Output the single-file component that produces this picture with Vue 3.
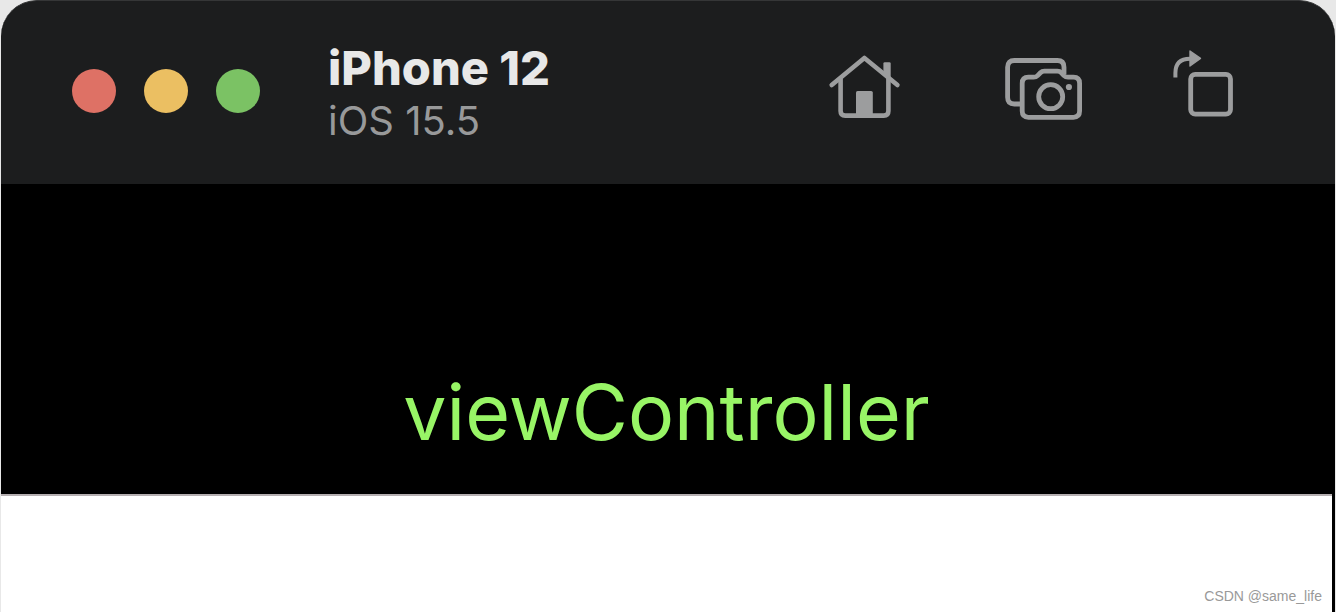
<script setup>
const lights = [
  { name: 'Close', tone: 'red' },
  { name: 'Minimize', tone: 'amber' },
  { name: 'Zoom', tone: 'green' },
]
</script>

<template>
  <div class="simulator">
    <header class="titlebar">
      <div class="lights">
        <button v-for="light in lights" :key="light.tone" type="button" class="light" :class="light.tone" :aria-label="light.name"></button>
      </div>
      <div class="device">
        <h1 class="name">iPhone 12</h1>
        <p class="version">iOS 15.5</p>
      </div>
      <div class="actions">
        <button type="button" class="action" aria-label="Home">
          <svg width="90" height="92" viewBox="0 0 90 92" fill="none" stroke="currentColor" stroke-width="4.6" stroke-linecap="round" stroke-linejoin="round">
            <path d="M11.7 40 44.4 13 77.4 40" />
            <path d="M20.6 34V66Q20.6 70.6 25.2 70.6H63.8Q68.4 70.6 68.4 66V34" />
            <path d="M63.4 29V18.6Q63.4 17.2 64.8 17.2H69.3Q70.7 17.2 70.7 18.6V35z" fill="currentColor" stroke="none" />
            <path d="M36 71V47.6Q36 46 37.6 46H51.2Q52.8 46 52.8 47.6V71z" fill="currentColor" stroke="none" />
          </svg>
        </button>
        <button type="button" class="action" aria-label="Screenshot">
          <svg width="100" height="92" viewBox="0 0 100 92" fill="none" stroke="currentColor" stroke-width="4.8" stroke-linejoin="round">
            <path d="M27 59H19.3Q12.6 59 12.6 52.3V22.2Q12.6 15.5 19.3 15.5H62.3Q69 15.5 69 22.2V29" />
            <path d="M33.4 32.2H38.6Q41 32.2 42.6 30.6L45.4 27.8Q47 26.2 49.4 26.2H62.4Q64.8 26.2 66.4 27.8L69 30.6Q70.6 32.2 73 32.2H78.4Q84.6 32.2 84.6 38.4V66.1Q84.6 72.3 78.4 72.3H33.4Q27.2 72.3 27.2 66.1V38.4Q27.2 32.2 33.4 32.2Z" />
            <circle cx="55.7" cy="51.7" r="12" />
            <circle cx="73.9" cy="42" r="3.1" fill="currentColor" stroke="none" />
          </svg>
        </button>
        <button type="button" class="action" aria-label="Rotate">
          <svg width="90" height="92" viewBox="0 0 90 92" fill="none" stroke="currentColor" stroke-width="4.8">
            <rect x="30.7" y="29.3" width="39.8" height="39.8" rx="4.6" />
            <path d="M15.4 32.6V28Q15.4 13.7 30 13.7" stroke-width="4" />
            <path d="M30 6 40.5 13.4 30 21z" fill="currentColor" stroke-width="1.4" stroke-linejoin="round" />
          </svg>
        </button>
      </div>
    </header>
    <main class="screen">
      <h2 class="nav-title">viewController</h2>
      <section class="content">
        <p class="credit">CSDN @same_life</p>
      </section>
    </main>
  </div>
</template>

<style>
body {
  margin: 0;
  background: #e8e8e8;
}
</style>

<style scoped>
.simulator {
  box-sizing: border-box;
  display: flex;
  flex-direction: column;
  min-height: 100vh;
  padding: 0 1px;
  font-family: Inter, "Liberation Sans", sans-serif;
}
h1, h2, p {
  margin: 0;
}
button {
  padding: 0;
  border: 0;
  background: none;
}
.titlebar {
  box-sizing: border-box;
  display: flex;
  align-items: center;
  height: 184px;
  padding: 0 85px 3px 71px;
  border-top: 1px solid #353637;
  border-radius: 36px 36px 0 0;
  background: #1c1d1e;
}
.lights {
  display: flex;
  gap: 28px;
}
.light {
  width: 44px;
  height: 44px;
  border-radius: 50%;
}
.red { background: #de7165; }
.amber { background: #ebbf62; }
.green { background: #7bc264; }
.device {
  margin-left: 68px;
  padding-top: 7px;
}
.name {
  color: #e8e8e8;
  font-size: 47px;
  font-weight: 800;
  line-height: 52px;
}
.version {
  color: #98999a;
  font-size: 40px;
  font-weight: 400;
  line-height: 54px;
}
.actions {
  display: flex;
  margin-left: auto;
}
.action {
  display: block;
  color: #9c9d9e;
}
.action + .action {
  margin-left: 85px;
}
.action + .action + .action {
  margin-left: 65px;
}
.action svg {
  display: block;
}
.screen {
  flex: 1;
  display: flex;
  flex-direction: column;
  background: #000;
}
.nav-title {
  padding: 180px 3px 34px 0;
  color: #98f566;
  font-size: 77px;
  font-weight: 400;
  line-height: 96px;
  text-align: center;
}
.content {
  flex: 1;
  display: flex;
  align-items: flex-end;
  justify-content: flex-end;
  margin-right: 3px;
  padding: 0 10px 6px;
  border-top: 2px solid #b5afb1;
  background: #fff;
}
.credit {
  color: #999;
  font-family: "Liberation Sans", sans-serif;
  font-size: 14px;
  line-height: 20px;
}
</style>
